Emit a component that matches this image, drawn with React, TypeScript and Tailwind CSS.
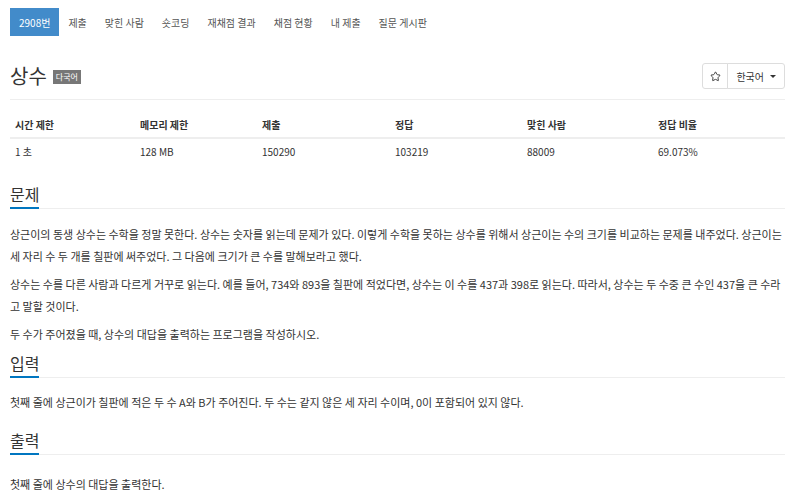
import { Star } from 'lucide-react'

const font = { fontFamily: '"Noto Sans CJK KR", "Noto Sans", sans-serif' }

const tabs = ['2908번', '제출', '맞힌 사람', '숏코딩', '재채점 결과', '채점 현황', '내 제출', '질문 게시판']

const headers = ['시간 제한', '메모리 제한', '제출', '정답', '맞힌 사람', '정답 비율']
const values = ['1 초', '128 MB', '150290', '103219', '88009', '69.073%']

const pClass = 'mb-[6px] text-[11px] leading-[22px] break-all'

function SectionTitle({ title }: { title: string }) {
  return (
    <div className="border-b border-[#eee]">
      <span className="-mb-px inline-block border-b-2 border-[#0076c0] pb-[2px] text-[16px] leading-[22px] text-[#333]">
        {title}
      </span>
    </div>
  )
}

export default function App() {
  return (
    <div style={font} className="min-h-[498px] bg-white pt-[8px] pr-[15px] pl-[10px] text-[#333]">
      <nav className="flex h-[28px] items-stretch">
        {tabs.map((tab, i) => (
          <a
            key={tab}
            className={
              i === 0
                ? 'flex items-center bg-[#428bca] px-[9px] text-[10px] text-white'
                : 'flex items-center px-[9px] text-[10px] text-[#555]'
            }
          >
            {tab}
          </a>
        ))}
      </nav>

      <div className="mt-[27px] flex items-center justify-between border-b border-[#eee] pb-[10px]">
        <div className="flex items-center gap-[6px]">
          <h1 className="text-[20px] leading-[26px] text-[#333]">상수</h1>
          <span className="mt-[2px] bg-[#777] px-[3px] text-[8px] leading-[14px] text-white">다국어</span>
        </div>
        <div className="flex h-[26px] text-[10px] text-[#333]">
          <button className="flex w-[26px] items-center justify-center rounded-l-[3px] border border-[#ddd] bg-white">
            <Star size={11} strokeWidth={2} />
          </button>
          <button className="-ml-px flex items-center gap-[6px] rounded-r-[3px] border border-[#ddd] bg-white px-[8px]">
            한국어
            <span className="h-0 w-0 border-x-[3px] border-t-[3px] border-x-transparent border-t-[#333]" />
          </button>
        </div>
      </div>

      <div className="mt-[12px] text-[10px]">
        <div className="grid grid-cols-[125px_122px_133px_132px_131px_1fr] border-b-2 border-[#eee] font-bold">
          {headers.map((h) => (
            <div key={h} className="px-[5px] py-[6px] leading-[13px]">
              {h}
            </div>
          ))}
        </div>
        <div className="grid grid-cols-[125px_122px_133px_132px_131px_1fr]">
          {values.map((v) => (
            <div key={v} className="px-[5px] py-[6px] leading-[14px]">
              {v}
            </div>
          ))}
        </div>
      </div>

      <section className="mt-[17px]">
        <SectionTitle title="문제" />
        <div className="mt-[14px]">
          <p className={pClass}>
            상근이의 동생 상수는 수학을 정말 못한다. 상수는 숫자를 읽는데 문제가 있다. 이렇게 수학을 못하는 상수를 위해서 상근이는 수의 크기를 비교하는 문제를 내주었다. 상근이는 세 자리 수 두 개를 칠판에 써주었다. 그 다음에 크기가 큰 수를 말해보라고 했다.
          </p>
          <p className={pClass}>
            상수는 수를 다른 사람과 다르게 거꾸로 읽는다. 예를 들어, 734와 893을 칠판에 적었다면, 상수는 이 수를 437과 398로 읽는다. 따라서, 상수는 두 수중 큰 수인 437을 큰 수라고 말할 것이다.
          </p>
          <p className={pClass}>두 수가 주어졌을 때, 상수의 대답을 출력하는 프로그램을 작성하시오.</p>
        </div>
      </section>

      <section className="mt-[1px]">
        <SectionTitle title="입력" />
        <div className="mt-[13px]">
          <p className={pClass}>
            첫째 줄에 상근이가 칠판에 적은 두 수 A와 B가 주어진다. 두 수는 같지 않은 세 자리 수이며, 0이 포함되어 있지 않다.
          </p>
        </div>
      </section>

      <section className="mt-[15px]">
        <SectionTitle title="출력" />
        <div className="mt-[18px]">
          <p className={pClass}>첫째 줄에 상수의 대답을 출력한다.</p>
        </div>
      </section>
    </div>
  )
}
